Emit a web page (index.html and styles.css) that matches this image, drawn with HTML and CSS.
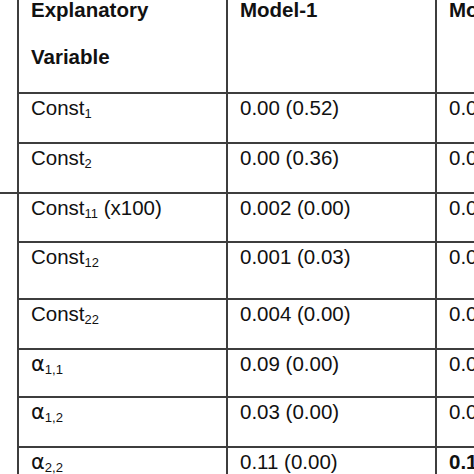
FILE: index.html
```html
<!DOCTYPE html>
<html>
<head>
<meta charset="utf-8">
<link rel="stylesheet" href="styles.css">
</head>
<body>
<table class="results">
  <colgroup>
    <col class="c-stub">
    <col class="c-var">
    <col class="c-m1">
    <col class="c-m2">
  </colgroup>
  <tr class="head">
    <td class="stub"></td>
    <td class="cell"><div class="hline">Explanatory</div><div class="hline">Variable</div></td>
    <td class="cell"><div class="hline">Model-1</div></td>
    <td class="cell"><div class="hline">Model-2</div></td>
  </tr>
  <tr class="r50">
    <td class="stub"></td>
    <td class="cell">Const<sub>1</sub></td>
    <td class="cell">0.00 (0.52)</td>
    <td class="cell">0.00 (0.47)</td>
  </tr>
  <tr class="r50">
    <td class="stub"></td>
    <td class="cell">Const<sub>2</sub></td>
    <td class="cell">0.00 (0.36)</td>
    <td class="cell">0.00 (0.31)</td>
  </tr>
  <tr class="r49">
    <td class="stub stub-line"></td>
    <td class="cell">Const<sub>11</sub> (x100)</td>
    <td class="cell">0.002 (0.00)</td>
    <td class="cell">0.002 (0.00)</td>
  </tr>
  <tr class="r57">
    <td class="stub"></td>
    <td class="cell">Const<sub>12</sub></td>
    <td class="cell">0.001 (0.03)</td>
    <td class="cell">0.001 (0.02)</td>
  </tr>
  <tr class="r50">
    <td class="stub"></td>
    <td class="cell">Const<sub>22</sub></td>
    <td class="cell">0.004 (0.00)</td>
    <td class="cell">0.004 (0.00)</td>
  </tr>
  <tr class="r48">
    <td class="stub"></td>
    <td class="cell"><span class="greek">α</span><sub class="gsub">1,1</sub></td>
    <td class="cell">0.09 (0.00)</td>
    <td class="cell">0.08 (0.00)</td>
  </tr>
  <tr class="r50">
    <td class="stub"></td>
    <td class="cell"><span class="greek">α</span><sub class="gsub">1,2</sub></td>
    <td class="cell">0.03 (0.00)</td>
    <td class="cell">0.03 (0.00)</td>
  </tr>
  <tr class="r50">
    <td class="stub"></td>
    <td class="cell"><span class="greek">α</span><sub class="gsub">2,2</sub></td>
    <td class="cell">0.11 (0.00)</td>
    <td class="cell strong">0.12 (0.00)</td>
  </tr>
</table>
</body>
</html>
```

FILE: styles.css
```css
html, body {
  margin: 0;
  padding: 0;
  background: #ffffff;
  overflow: hidden;
  width: 474px;
  height: 474px;
}

.results {
  border-collapse: collapse;
  table-layout: fixed;
  width: 656px;
  margin-top: -14px;
  font-family: "Liberation Sans", Arial, sans-serif;
  font-size: 20.5px;
  color: #111111;
}

.c-stub { width: 18px; }
.c-var { width: 209px; }
.c-m1 { width: 209px; }
.c-m2 { width: 220px; }

.stub {
  padding: 0;
  border: none;
}

.stub-line {
  border-top: 2px solid #3d3d3d;
}

.cell {
  border: 2px solid #3d3d3d;
  vertical-align: top;
  padding: 2px 12px 0 12px;
  line-height: 1.15;
  white-space: nowrap;
}

.head .cell {
  border-top: none;
  padding-top: 0;
  font-weight: bold;
}

.hline {
  line-height: 47px;
}

.head { height: 107px; }
.r50 { height: 50px; }
.r49 { height: 49px; }
.r57 { height: 57px; }
.r48 { height: 48px; }

sub {
  font-size: 0.63em;
  vertical-align: -0.2em;
  line-height: 0;
}

.greek {
  font-family: "DejaVu Sans", "Liberation Sans", sans-serif;
  font-size: 1.02em;
}

.gsub {
  font-size: 0.64em;
}

.strong {
  font-weight: bold;
}
```
